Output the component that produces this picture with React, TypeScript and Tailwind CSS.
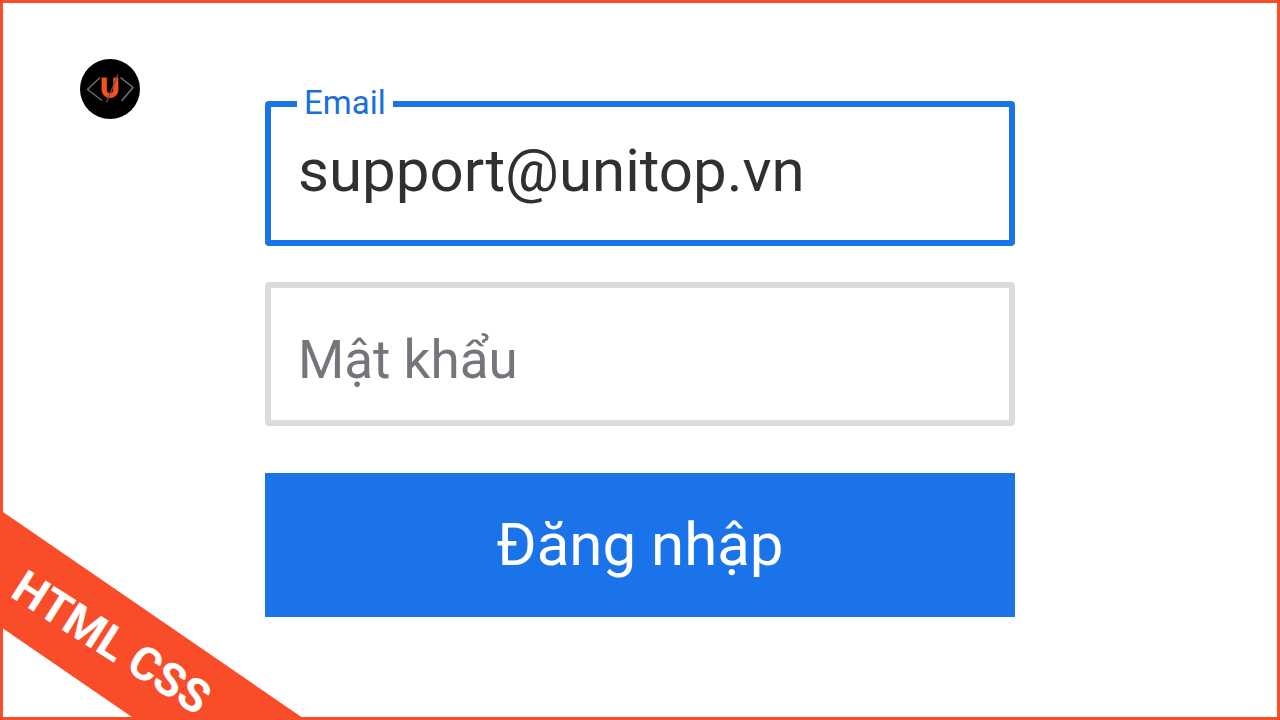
import React, { useState } from 'react';

function Logo() {
  return (
    <svg viewBox="0 0 60 60" className="w-15 h-15" role="img" aria-label="Unitop">
      <circle cx="30" cy="30" r="30" fill="#000" />
      <path d="M20 18.5 7.5 30.5 22 41.5" fill="none" stroke="#6e6a6a" strokeWidth="1.5" />
      <path d="M40.5 18.5 53 28.5 41.5 42" fill="none" stroke="#777373" strokeWidth="1.5" />
      <path d="M24.2 18.5v12.2a5.8 5.8 0 0 0 11.6 0V18.5" fill="none" stroke="#f4511e" strokeWidth="5.2" />
      <path d="M38 15.5 26.5 43.5" stroke="#6b5148" strokeWidth="1.3" />
    </svg>
  );
}

export default function App() {
  const [email, setEmail] = useState('support@unitop.vn');
  const [password, setPassword] = useState('');

  const handleSubmit = (event: React.FormEvent) => {
    event.preventDefault();
  };

  return (
    <main className="relative min-h-screen overflow-hidden border-3 border-[#f94d29] bg-white font-['Roboto',sans-serif] grid grid-cols-[1fr_minmax(0,750px)_1fr]">
      <header className="pt-14 pl-[77px]">
        <Logo />
      </header>

      <form onSubmit={handleSubmit} className="flex flex-col justify-center pb-0.5">
        <div className="relative mb-9">
          <label
            htmlFor="email"
            className="absolute left-8 -top-[18px] px-[7px] bg-white text-[33px] leading-10 text-[#1a6fdc]"
          >
            Email
          </label>
          <input
            id="email"
            type="email"
            value={email}
            onChange={(e) => setEmail(e.target.value)}
            className="block w-full h-[145px] px-[27px] pb-1.5 rounded-sm border-6 border-[#1a73e8] text-[60px] text-[#303030] outline-none"
          />
        </div>

        <input
          id="password"
          type="password"
          aria-label="Mật khẩu"
          placeholder="Mật khẩu"
          value={password}
          onChange={(e) => setPassword(e.target.value)}
          className="block w-full h-36 px-[27px] pt-3 mb-[47px] rounded-sm border-6 border-[#dadbde] text-[53px] text-[#303030] placeholder:text-[#75767c] outline-none"
        />

        <button type="submit" className="w-full h-36 bg-[#1a73e8] text-[60px] text-white cursor-pointer">
          Đăng nhập
        </button>
      </form>

      {/* corner ribbon */}
      <div className="absolute -left-36 bottom-[26px] w-[500px] h-24 rotate-[34.5deg] flex items-center justify-center pl-1 pb-1 bg-[#f94d29] text-[46px] leading-none font-bold text-white">
        <span className="-rotate-2">HTML CSS</span>
      </div>
    </main>
  );
}
